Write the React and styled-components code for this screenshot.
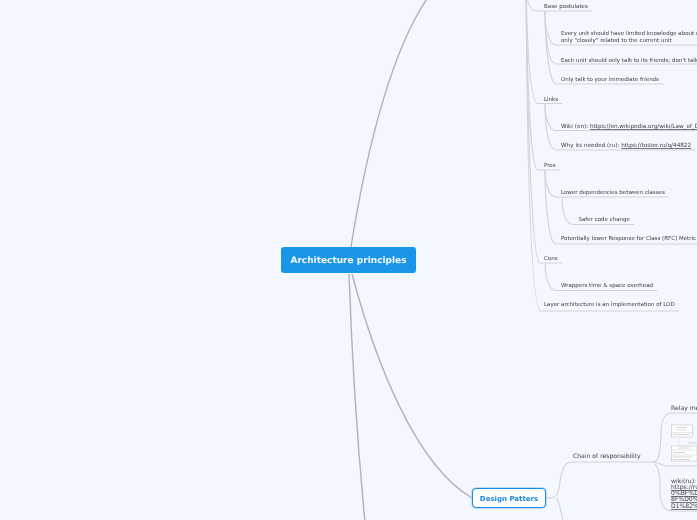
import React from "react";
import styled, { createGlobalStyle } from "styled-components";

const Global = createGlobalStyle`
  html, body { margin: 0; padding: 0; background: #f4f7ff; }
  body { overflow: hidden; font-family: "DejaVu Sans", sans-serif; text-rendering: geometricPrecision; }
`;

const Canvas = styled.div`
  position: relative;
  width: 697px;
  height: 520px;
  overflow: hidden;
  background: #f4f7ff;
  will-change: transform;
`;

const Wires = styled.svg`
  position: absolute;
  inset: 0;
  width: 697px;
  height: 520px;
  fill: none;
`;

const Wire = styled.path`
  stroke: ${(p) => (p.$strong ? "#b2b2b4" : "#d0d3dc")};
  stroke-width: ${(p) => (p.$strong ? 1.4 : 1.1)};
  fill: none;
`;

/* Free-canvas anchors: where each branch of the map sits */
const Anchor = styled.div`
  position: absolute;
  left: ${(p) => p.$x}px;
  top: ${(p) => p.$y}px;
`;

const Tree = styled(Anchor)`
  display: flex;
  flex-direction: column;
  gap: 12.45px;
`;

const Group = styled.div`
  display: flex;
  flex-direction: column;
`;

const Children = styled.div`
  display: flex;
  flex-direction: column;
  gap: 12.45px;
  padding: 20.2px 0 0 ${(p) => p.$indent || 17}px;
`;

const Topic = styled.div`
  font-size: 5.5px;
  line-height: 7px;
  color: #3c3c41;
  white-space: nowrap;
`;

const LinkTopic = styled(Topic)`
  font-size: 5.7px;
`;

const Branch = styled(Anchor)`
  font-size: 6.1px;
  line-height: 7px;
  color: #3c3c41;
  white-space: nowrap;
`;

const WrappedBranch = styled(Branch)`
  line-height: 6.3px;
`;

const Url = styled.a`
  color: #3c3c41;
  text-decoration: underline;
  text-decoration-color: #77777c;
`;

const Root = styled(Anchor)`
  width: 135px;
  height: 26px;
  box-sizing: border-box;
  padding-top: 2px;
  display: flex;
  align-items: center;
  justify-content: center;
  background: #1a96e8;
  border-radius: 3px;
  color: #f4f8ff;
  font-size: 9px;
  font-weight: 700;
`;

const Main = styled(Anchor)`
  width: 74px;
  height: 20px;
  box-sizing: border-box;
  padding-top: 1px;
  display: flex;
  align-items: center;
  justify-content: center;
  background: #fff;
  border: 1px solid #1a8cf0;
  border-radius: 4px;
  box-shadow: 0 0 0 0.5px #8cc4f5;
  color: #1a86e8;
  font-size: 7px;
  font-weight: 700;
`;

const Diagram = styled.svg`
  position: absolute;
  left: 671px;
  top: 424px;
  width: 26px;
  height: 40px;
`;

const strong = [
  "M351 247 C368 140 395 40 432 -8",
  "M349 274 C352 360 358 450 365 522",
  "M352 274 C375 360 415 465 472 498",
];

const soft = [
  "M526 -20 C526 4 530 11 536 11 L592 11",
  "M526 -20 C527 50 530 103.500 538 103.500 L562 103.500",
  "M526 -20 C527 90 531 170 538 170 L560 170",
  "M526 -20 C527 120 532 263 540 263 L562 263",
  "M526 -20 C527 160 531 311 541 311 L679 311",
  "M545 11 C545 28 549 45 556 45 L697 45",
  "M545 11 C545 40 549 64 556 64 L697 64",
  "M545 11 C545 50 550 84 556 84 L664 84",
  "M545 104 C545 118 549 130.500 556 130.500 L697 130.500",
  "M545 104 C545 130 549 150 556 150 L695 150",
  "M545 170 C545 184 549 197 556 197 L668 197",
  "M545 170 C545 205 549 244 556 244 L697 244",
  "M562 197 C562 212 566 224.500 573 224.500 L634 224.500",
  "M545 263 C545 276 549 290.500 556 290.500 L657 290.500",
  "M546 498 C556 498 558 497 560 482 C562 468 565 462 572 462 L653 462",
  "M556 498 C559 500 561 510 563 522",
  "M653 462 C660 462 660 450 661 435 C661 420 664 413 672 413 L697 413",
  "M653 462 C660 462 661 466 668 466 L697 466",
  "M655 464 C660 470 660 480 660 490 C660 505 664 511 672 511 L697 511",
];

export default function App() {
  return (
    <Canvas>
      <Global />
      <Wires viewBox="0 0 697 520">
        {soft.map((d) => <Wire key={d} d={d} />)}
        {strong.map((d) => <Wire key={d} d={d} $strong />)}
      </Wires>

      <Root $x={281} $y={247}>Architecture principles</Root>
      <Main $x={472} $y={488}>Design Patters</Main>

      <Tree $x={544} $y={4}>
        <Group>
          <Topic>Base postulates</Topic>
          <Children>
            <Topic>
              Every unit should have limited knowledge about other units:<br />
              only "closely" related to the current unit
            </Topic>
            <Topic>Each unit should only talk to its friends; don't talk to strangers</Topic>
            <Topic>Only talk to your immediate friends</Topic>
          </Children>
        </Group>
        <Group>
          <Topic>Links</Topic>
          <Children>
            <LinkTopic>Wiki (en): <Url>https://en.wikipedia.org/wiki/Law_of_Demeter</Url></LinkTopic>
            <LinkTopic>Why its needed (ru): <Url>https://toster.ru/q/44822</Url></LinkTopic>
          </Children>
        </Group>
        <Group>
          <Topic>Pros</Topic>
          <Children>
            <Group>
              <Topic>Lower dependencies between classes</Topic>
              <Children $indent={17.5}>
                <Topic>Safer code change</Topic>
              </Children>
            </Group>
            <Topic>Potentially lower Response for Class (RFC) Metric</Topic>
          </Children>
        </Group>
        <Group>
          <Topic>Cons</Topic>
          <Children>
            <Topic>Wrappers time &amp; space overhead</Topic>
          </Children>
        </Group>
        <Topic>Layer architecture is an implementation of LOD</Topic>
      </Tree>

      <Branch $x={573} $y={452.5}>Chain of responsibility</Branch>
      <Branch $x={671} $y={404.5}>Relay messages</Branch>
      <WrappedBranch $x={671} $y={478.5}>
        wiki(ru):<br />
        <Url>https://ru.wikipedia</Url><br />
        <Url>0%BF%D0%BE%D1</Url><br />
        <Url>8F%D0%BE%D0%BA</Url><br />
        <Url>D1%82%D0%B2%D0</Url>
      </WrappedBranch>

      <Diagram viewBox="0 0 26 40">
        <g fill="#fff" stroke="#a8a8ac" strokeWidth="0.4">
          <rect x="0.500" y="1" width="21" height="12" />
          <rect x="0.500" y="22" width="25.500" height="15" />
        </g>
        <g stroke="#c4c4c8" strokeWidth="0.5">
          <path d="M0.500 8.700 H21.500 M0.500 26 H26 M0.500 31 H26" />
          <path d="M8 13 V22" strokeDasharray="1 1" />
          <path d="M5 3.500 H16 M6 6 H15 M2 10.500 H19 M7 24 H19 M2 28.500 H14 M2 33 H21 M2 35.500 H19 M17 19 H26" strokeWidth="0.7" />
        </g>
      </Diagram>
    </Canvas>
  );
}
